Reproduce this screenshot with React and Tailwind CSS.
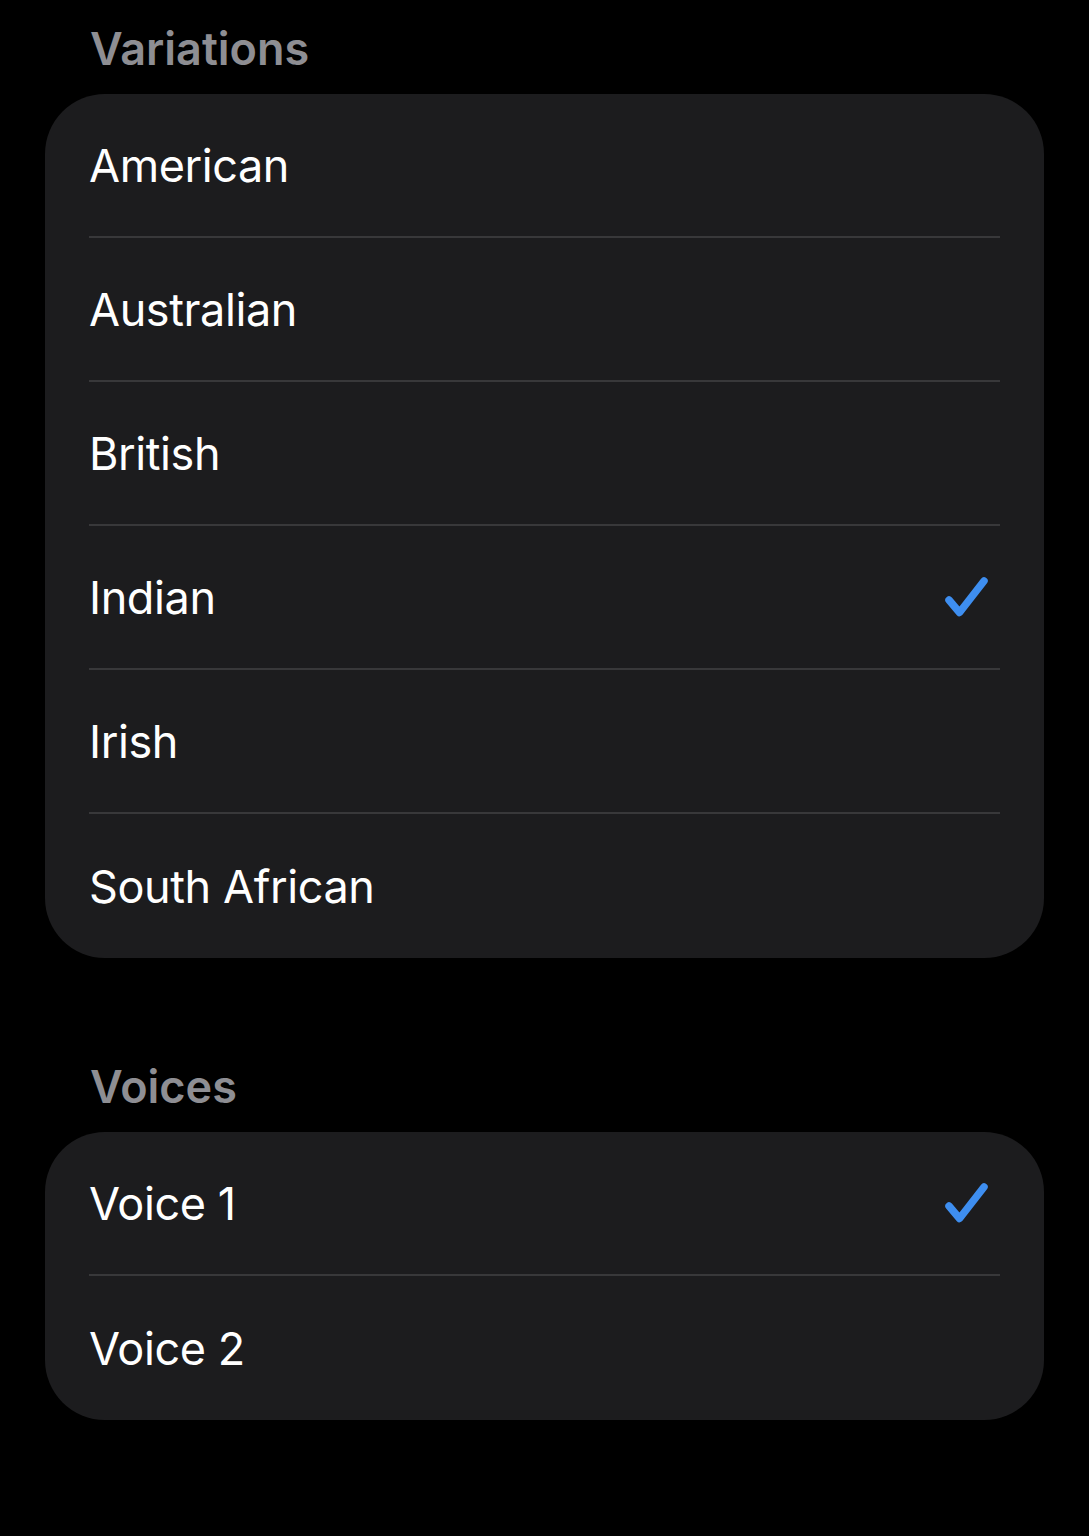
const variations = [
  { name: 'American' },
  { name: 'Australian' },
  { name: 'British' },
  { name: 'Indian', checked: true },
  { name: 'Irish' },
  { name: 'South African' },
];

const voices = [
  { name: 'Voice 1', checked: true },
  { name: 'Voice 2' },
];

const Check = () => (
  <svg width="46" height="44" viewBox="0 0 46 44" fill="none" stroke="#3e8ef0" strokeWidth="7.5" strokeLinecap="round" strokeLinejoin="round">
    <path d="M5 25 L15.5 37.5 L40 6" />
  </svg>
);

const Section = ({ title, items, className = '' }) => (
  <section className={className}>
    <h2 className="pl-[45px] text-[45px] leading-[54px] font-semibold text-[#8e8e93]">{title}</h2>
    <div className="mt-[18px] rounded-[60px] bg-[#1c1c1e] overflow-hidden">
      {items.map((item, i) => (
        <div
          key={item.name}
          className={`mx-[44px] h-[144px] flex items-center justify-between ${
            i < items.length - 1 ? 'border-b-2 border-[#38383a]' : ''
          }`}
        >
          <span className="pt-[2px] text-[45px] text-white tracking-[-0.4px]">{item.name}</span>
          {item.checked && (
            <span className="mr-[10px] flex items-center">
              <Check />
            </span>
          )}
        </div>
      ))}
    </div>
  </section>
);

export default function App() {
  return (
    <div className="min-h-[1536px] bg-black px-[45px] pt-[22px] font-['Inter','Noto_Sans',sans-serif]">
      <Section title="Variations" items={variations} />
      <Section title="Voices" items={voices} className="mt-[102px]" />
    </div>
  );
}
